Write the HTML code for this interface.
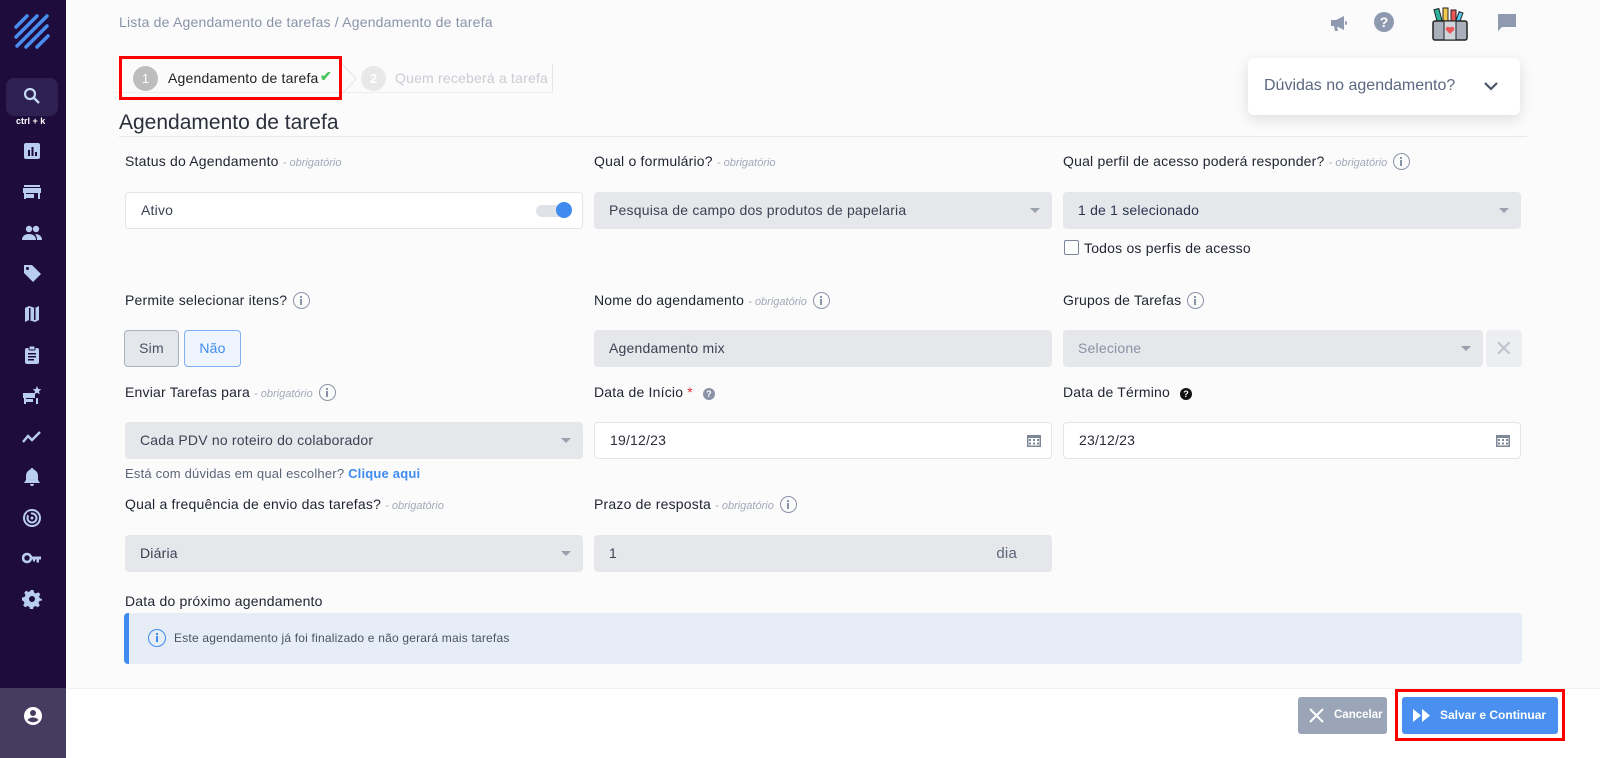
<!DOCTYPE html>
<html><head><meta charset="utf-8"><style>
*{box-sizing:border-box;margin:0;padding:0}
body{width:1600px;height:758px;overflow:hidden;background:#fbfbfc;font-family:"Liberation Sans",sans-serif;position:relative;color:#1f2430}
.a{position:absolute}
#sb{left:0;top:0;width:66px;height:758px;background:#1e0c3c}
#sb .bot{left:0;top:688px;width:66px;height:70px;background:#463c62}
.ic{position:absolute;left:22px;width:20px;height:20px}
.lbl{position:absolute;font-size:14px;color:#1f2430;white-space:nowrap;letter-spacing:.2px}
.lbl i{font-size:11px;color:#a3a9b8;letter-spacing:0}
.inp{position:absolute;height:37px;border-radius:4px;font-size:14px;padding:0 15px;line-height:37px;white-space:nowrap;color:#3b4252;letter-spacing:.2px}
.g{background:#e5e7eb}
.w{background:#fff;border:1px solid #e3e5ea;line-height:35px}
.car{position:absolute;right:12px;top:16px;width:0;height:0;border-left:5px solid transparent;border-right:5px solid transparent;border-top:5px solid #9aa1ad}
.info{display:inline-block;width:17px;height:17px;border:1.6px solid #8a93a6;border-radius:50%;vertical-align:-4px;margin-left:6px;position:relative}
.info:before{content:"";position:absolute;left:6px;top:3px;width:2px;height:2px;background:#8a93a6}
.info:after{content:"";position:absolute;left:6px;top:6px;width:2px;height:6px;background:#8a93a6}
</style></head><body>
<div id="sb" class="a">
<svg class="a" style="left:13px;top:12px" width="40" height="40" viewBox="0 0 40 40"><g stroke="#4a8df0" stroke-width="3.5" stroke-linecap="round"><line x1="3" y1="15" x2="14" y2="4"/><line x1="3" y1="25" x2="24" y2="4"/><line x1="4" y1="34" x2="34" y2="4"/><line x1="13" y1="35" x2="34" y2="14"/><line x1="24" y1="35" x2="35" y2="24"/></g></svg>
<div class="a" style="left:6px;top:78px;width:52px;height:38px;background:#2e2050;border-radius:8px"></div>
<svg class="a" style="left:23px;top:87px" width="18" height="18" viewBox="0 0 18 18"><circle cx="7" cy="7" r="5" stroke="#c5d6f5" stroke-width="2.2" fill="none"/><line x1="11" y1="11" x2="16" y2="16" stroke="#c5d6f5" stroke-width="2.5"/></svg>
<div class="a" style="left:16px;top:116px;font-size:9px;color:#fff;font-weight:bold">ctrl + k</div>
<svg class="ic" style="top:141px" viewBox="0 0 20 20"><rect x="2" y="2" width="16" height="16" rx="2" fill="#b9cdf3"/><rect x="6" y="9" width="2" height="6" fill="#1e0c3c"/><rect x="9.5" y="6" width="2" height="9" fill="#1e0c3c"/><rect x="13" y="11" width="2" height="4" fill="#1e0c3c"/></svg>
<svg class="ic" style="top:182px" viewBox="0 0 20 20"><rect x="2" y="3" width="16" height="2" fill="#b9cdf3"/><rect x="1" y="6" width="18" height="5" fill="#b9cdf3"/><rect x="2" y="11" width="2" height="6" fill="#b9cdf3"/><rect x="16" y="11" width="2" height="6" fill="#b9cdf3"/><rect x="4" y="12" width="8" height="4" fill="#b9cdf3"/></svg>
<svg class="ic" style="top:223px" viewBox="0 0 20 20"><circle cx="7" cy="6" r="3.2" fill="#b9cdf3"/><circle cx="14" cy="6" r="3.2" fill="#b9cdf3"/><path d="M0 17c0-4 3-6 7-6s7 2 7 6z M13 11c4 0 7 2 7 6h-5c0-3-1-5-2-6z" fill="#b9cdf3"/></svg>
<svg class="ic" style="top:263px" viewBox="0 0 20 20"><path d="M2 2h8l9 9-8 8-9-9z" fill="#b9cdf3"/><circle cx="5.5" cy="5.5" r="1.5" fill="#1e0c3c"/></svg>
<svg class="ic" style="top:304px" viewBox="0 0 20 20"><path d="M3 4l4-2 6 2 4-2v14l-4 2-6-2-4 2z" fill="#b9cdf3"/><rect x="7" y="4" width="1.5" height="12" fill="#1e0c3c"/><rect x="12" y="4" width="1.5" height="12" fill="#1e0c3c"/></svg>
<svg class="ic" style="top:345px" viewBox="0 0 20 20"><rect x="3" y="3" width="14" height="16" rx="2" fill="#b9cdf3"/><rect x="7" y="1" width="6" height="4" rx="1" fill="#b9cdf3" stroke="#1e0c3c"/><rect x="6" y="8" width="8" height="1.5" fill="#1e0c3c"/><rect x="6" y="11" width="8" height="1.5" fill="#1e0c3c"/><rect x="6" y="14" width="6" height="1.5" fill="#1e0c3c"/></svg>
<svg class="ic" style="top:386px" viewBox="0 0 20 20"><path d="M15 0l1.3 3 3 .3-2.3 2 .7 3-2.7-1.6-2.7 1.6.7-3-2.3-2 3-.3z" fill="#b9cdf3"/><rect x="1" y="7" width="12" height="5" fill="#b9cdf3"/><rect x="2" y="12" width="2" height="6" fill="#b9cdf3"/><rect x="14" y="12" width="2" height="6" fill="#b9cdf3"/><rect x="4" y="13" width="7" height="3" fill="#b9cdf3"/></svg>
<svg class="ic" style="top:427px" viewBox="0 0 20 20"><path d="M1 15l5-6 4 4 8-8" stroke="#b9cdf3" stroke-width="2.4" fill="none"/></svg>
<svg class="ic" style="top:467px" viewBox="0 0 20 20"><path d="M10 1c1 0 1.5.8 1.5 1.5C14.5 3.5 16 6 16 9v4l2 3H2l2-3V9c0-3 1.5-5.5 4.5-6.5C8.5 1.8 9 1 10 1zM8 17h4a2 2 0 0 1-4 0z" fill="#b9cdf3"/></svg>
<svg class="ic" style="top:508px" viewBox="0 0 20 20"><circle cx="10" cy="10" r="8" stroke="#b9cdf3" stroke-width="2" fill="none"/><circle cx="10" cy="10" r="4.5" stroke="#b9cdf3" stroke-width="2" fill="none"/><line x1="10" y1="10" x2="6" y2="4" stroke="#1e0c3c" stroke-width="3"/><circle cx="10" cy="10" r="1.5" fill="#b9cdf3"/></svg>
<svg class="ic" style="top:548px" viewBox="0 0 20 20"><circle cx="5" cy="10" r="4" stroke="#b9cdf3" stroke-width="2.6" fill="none"/><path d="M9 8.5h10v3h-2v3h-2.5v-3H13v2h-2v-2H9z" fill="#b9cdf3"/></svg>
<svg class="ic" style="top:589px" viewBox="0 0 20 20"><path d="M8.5 1h3l.5 2.5 2 1 2.3-1.3 2 2-1.3 2.3 1 2L20 10v0 1.5l-2.5.5-1 2 1.3 2.3-2 2-2.3-1.3-2 1-.5 2.5h-3l-.5-2.5-2-1-2.3 1.3-2-2 1.3-2.3-1-2L0 11.5v-3l2.5-.5 1-2-1.3-2.3 2-2 2.3 1.3 2-1z" fill="#b9cdf3"/><circle cx="10" cy="10" r="3" fill="#1e0c3c"/></svg>
<div class="a bot"></div>
<svg class="a" style="left:23px;top:706px" width="20" height="20" viewBox="0 0 20 20"><circle cx="10" cy="10" r="9" fill="#fff"/><circle cx="10" cy="7" r="3" fill="#463c62"/><path d="M4.5 14c1.5-2 3.5-2.5 5.5-2.5s4 .5 5.5 2.5c-1.5 1.5-3.5 2.2-5.5 2.2s-4-.7-5.5-2.2z" fill="#463c62"/></svg>
</div>

<div class="a" style="left:119px;top:14px;font-size:14px;color:#8a94a8;letter-spacing:.2px">Lista de Agendamento de tarefas / Agendamento de tarefa</div>
<svg class="a" style="left:1329px;top:13px" width="20" height="20" viewBox="0 0 20 20"><path d="M2 7h5l8-4v14l-8-4H2z M5 13h3l1 5H6z M16 8a2 2 0 0 1 0 4z" fill="#8f9ab0"/></svg>
<svg class="a" style="left:1374px;top:12px" width="20" height="20" viewBox="0 0 20 20"><circle cx="10" cy="10" r="10" fill="#8f9ab0"/><text x="10" y="15" font-size="14" font-weight="bold" fill="#fff" text-anchor="middle" font-family="Liberation Sans">?</text></svg>
<svg class="a" style="left:1431px;top:4px" width="38" height="38" viewBox="0 0 38 38"><rect x="5" y="5" width="5" height="16" fill="#2bb39a" stroke="#222" transform="rotate(-15 7 13)"/><rect x="12" y="4" width="5" height="16" fill="#f2c94c" stroke="#222"/><rect x="20" y="6" width="5" height="14" fill="#eb5757" stroke="#222"/><rect x="26" y="8" width="4" height="12" fill="#56ccf2" stroke="#222" transform="rotate(20 28 14)"/><rect x="2" y="17" width="34" height="19" rx="2" fill="#a9b0bb" stroke="#222" stroke-width="1.5"/><rect x="13" y="17" width="12" height="19" fill="#d0d5dc" stroke="#222"/><path d="M19 30l-4-4a2 2 0 0 1 4-2a2 2 0 0 1 4 2z" fill="#eb5757"/></svg>
<svg class="a" style="left:1497px;top:13px" width="20" height="20" viewBox="0 0 20 20"><path d="M1 1h18v13H5l-4 4z" fill="#8f9ab0"/></svg>

<div class="a" style="left:115px;top:64px;width:438px;height:29px;border-right:1px solid #e3e5ea;border-bottom:1px solid #eceef1"></div>
<div class="a" style="left:119px;top:56px;width:223px;height:44px;border:3px solid #f00"></div>
<div class="a" style="left:133px;top:66px;width:25px;height:25px;border-radius:50%;background:#bdbdbd;color:#fff;font-size:13px;text-align:center;line-height:25px">1</div>
<div class="a" style="left:168px;top:70px;font-size:14px;color:#222;letter-spacing:.2px">Agendamento de tarefa</div>
<div class="a" style="left:320px;top:68px;font-size:14px;color:#4cc35b;font-weight:bold">✔</div>
<svg class="a" style="left:342px;top:64px" width="16" height="30"><path d="M0 0l14 15L0 30" stroke="#e3e5ea" fill="none"/></svg>
<div class="a" style="left:361px;top:66px;width:25px;height:25px;border-radius:50%;background:#e8e8e8;color:#fff;font-size:13px;text-align:center;line-height:25px;font-weight:bold">2</div>
<div class="a" style="left:395px;top:70px;font-size:14px;color:#c8ccd3;letter-spacing:.2px">Quem receberá a tarefa</div>

<div class="a" style="left:119px;top:111px;font-size:21px;color:#2b2f3a">Agendamento de tarefa</div>
<div class="a" style="left:119px;top:136px;width:1408px;height:1px;background:#e6e8ec"></div>

<div class="a" style="left:1248px;top:58px;width:272px;height:57px;background:#fff;border-radius:6px;box-shadow:0 4px 14px rgba(0,0,0,.12)"></div>
<div class="a" style="left:1264px;top:77px;font-size:16px;color:#5c6780">Dúvidas no agendamento?</div>
<svg class="a" style="left:1483px;top:80px" width="16" height="12"><path d="M2 3l6 6 6-6" stroke="#4b5568" stroke-width="2.2" fill="none"/></svg>

<div class="lbl" style="left:125px;top:153px">Status do Agendamento <i>- obrigatório</i></div>
<div class="inp w" style="left:125px;top:192px;width:458px">Ativo<div class="a" style="right:10px;top:12px;width:36px;height:12px;border-radius:6px;background:#dfe2e6"></div><div class="a" style="right:10px;top:9px;width:16px;height:16px;border-radius:50%;background:#3f8bf0"></div></div>
<div class="lbl" style="left:594px;top:153px">Qual o formulário? <i>- obrigatório</i></div>
<div class="inp g" style="left:594px;top:192px;width:458px">Pesquisa de campo dos produtos de papelaria<div class="car"></div></div>
<div class="lbl" style="left:1063px;top:153px">Qual perfil de acesso poderá responder? <i>- obrigatório</i><span class="info"></span></div>
<div class="inp g" style="left:1063px;top:192px;width:458px;color:#2b3350">1 de 1 selecionado<div class="car"></div></div>
<div class="a" style="left:1064px;top:240px;width:15px;height:15px;border:1.5px solid #7b8496;border-radius:2px;background:#fff"></div>
<div class="lbl" style="left:1084px;top:240px">Todos os perfis de acesso</div>

<div class="lbl" style="left:125px;top:292px">Permite selecionar itens?<span class="info"></span></div>
<div class="inp" style="left:124px;top:330px;width:55px;background:#e4e7eb;border:1px solid #aab1bc;text-align:center;padding:0;line-height:35px;color:#4a5262">Sim</div>
<div class="inp" style="left:184px;top:330px;width:57px;background:#eef5ff;border:1px solid #7fb0f3;text-align:center;padding:0;line-height:35px;color:#3f8bf0">Não</div>
<div class="lbl" style="left:594px;top:292px">Nome do agendamento <i>- obrigatório</i><span class="info"></span></div>
<div class="inp g" style="left:594px;top:330px;width:458px">Agendamento mix</div>
<div class="lbl" style="left:1063px;top:292px">Grupos de Tarefas<span class="info"></span></div>
<div class="inp g" style="left:1063px;top:330px;width:420px;color:#8a93a6">Selecione<div class="car"></div></div>
<div class="inp" style="left:1486px;top:330px;width:36px;background:#eceef1;padding:0;text-align:center;color:#c0c5cd;font-size:22px">✕</div>

<div class="lbl" style="left:125px;top:384px">Enviar Tarefas para <i>- obrigatório</i><span class="info"></span></div>
<div class="inp g" style="left:125px;top:422px;width:458px">Cada PDV no roteiro do colaborador<div class="car"></div></div>
<div class="lbl" style="left:125px;top:466px;font-size:13px;color:#5c6578">Está com dúvidas em qual escolher? <b style="color:#3f8bf0">Clique aqui</b></div>
<div class="lbl" style="left:594px;top:384px">Data de Início <span style="color:#e03030">*</span> <span style="display:inline-block;width:12px;height:12px;border-radius:50%;background:#8a93a6;color:#fff;font-size:9px;text-align:center;line-height:12px;font-weight:bold;margin-left:6px;vertical-align:0">?</span></div>
<div class="inp w" style="left:594px;top:422px;width:458px;color:#2b2f3a">19/12/23<svg class="a" style="right:10px;top:10px" width="14" height="14" viewBox="0 0 14 14"><rect x="0" y="2" width="14" height="12" fill="#7e8796"/><rect x="1.5" y="5" width="11" height="7.5" fill="#fff"/><g fill="#7e8796"><rect x="2" y="6" width="2" height="2"/><rect x="6" y="6" width="2" height="2"/><rect x="10" y="6" width="2" height="2"/><rect x="2" y="9.5" width="2" height="2"/><rect x="6" y="9.5" width="2" height="2"/><rect x="10" y="9.5" width="2" height="2"/></g></svg></div>
<div class="lbl" style="left:1063px;top:384px">Data de Término <span style="display:inline-block;width:12px;height:12px;border-radius:50%;background:#111;color:#fff;font-size:9px;text-align:center;line-height:12px;font-weight:bold;margin-left:6px;vertical-align:0">?</span></div>
<div class="inp w" style="left:1063px;top:422px;width:458px;color:#2b2f3a">23/12/23<svg class="a" style="right:10px;top:10px" width="14" height="14" viewBox="0 0 14 14"><rect x="0" y="2" width="14" height="12" fill="#7e8796"/><rect x="1.5" y="5" width="11" height="7.5" fill="#fff"/><g fill="#7e8796"><rect x="2" y="6" width="2" height="2"/><rect x="6" y="6" width="2" height="2"/><rect x="10" y="6" width="2" height="2"/><rect x="2" y="9.5" width="2" height="2"/><rect x="6" y="9.5" width="2" height="2"/><rect x="10" y="9.5" width="2" height="2"/></g></svg></div>

<div class="lbl" style="left:125px;top:496px">Qual a frequência de envio das tarefas? <i>- obrigatório</i></div>
<div class="inp g" style="left:125px;top:535px;width:458px">Diária<div class="car"></div></div>
<div class="lbl" style="left:594px;top:496px">Prazo de resposta <i>- obrigatório</i><span class="info"></span></div>
<div class="inp g" style="left:594px;top:535px;width:458px">1<span class="a" style="right:35px;font-size:15px;color:#5c6578">dia</span></div>

<div class="lbl" style="left:125px;top:593px">Data do próximo agendamento</div>
<div class="a" style="left:124px;top:613px;width:1398px;height:51px;background:#e6edf6;border-left:5px solid #3f8bf0;border-radius:4px"></div>
<div class="a" style="left:148px;top:629px;width:18px;height:18px;border:1.6px solid #3f8bf0;border-radius:50%"><div class="a" style="left:6.5px;top:3px;width:2px;height:2px;background:#3f8bf0"></div><div class="a" style="left:6.5px;top:6px;width:2px;height:6px;background:#3f8bf0"></div></div>
<div class="lbl" style="left:174px;top:631px;font-size:12px;color:#4b5262">Este agendamento já foi finalizado e não gerará mais tarefas</div>

<div class="a" style="left:66px;top:688px;width:1534px;height:70px;background:#fff;border-top:1px solid #f0f1f3"></div>
<div class="a" style="left:1298px;top:697px;width:89px;height:37px;background:#9aa5b8;border-radius:3px;color:#fff;font-size:11.5px;font-weight:bold;line-height:37px;padding-left:36px;white-space:nowrap">Cancelar</div>
<svg class="a" style="left:1309px;top:708px" width="15" height="15"><path d="M1 1l13 13M14 1L1 14" stroke="#fff" stroke-width="2"/></svg>
<div class="a" style="left:1395px;top:689px;width:170px;height:52px;border:3px solid #f00"></div>
<div class="a" style="left:1402px;top:697px;width:156px;height:37px;background:#4a90f0;border-radius:3px;color:#fff;font-size:12px;font-weight:bold;line-height:37px;padding-left:38px;white-space:nowrap">Salvar e Continuar</div>
<svg class="a" style="left:1413px;top:709px" width="18" height="13"><path d="M0 0l8 6.5L0 13zM9 0l8 6.5L9 13z" fill="#fff"/></svg>
</body></html>
